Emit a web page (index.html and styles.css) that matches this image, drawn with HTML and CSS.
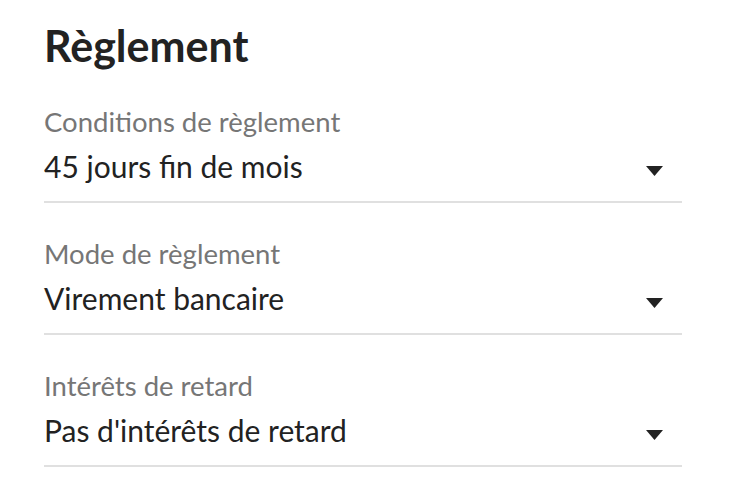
FILE: index.html
```html
<!DOCTYPE html>
<html lang="fr">
<head>
  <meta charset="UTF-8">
  <meta name="viewport" content="width=device-width, initial-scale=1.0">
  <title>Règlement</title>
  <link rel="stylesheet" href="styles.css">
</head>
<body>
  <div class="panel">
    <h1>Règlement</h1>

    <!-- Payment terms -->
    <div class="field">
      <div class="field-label">Conditions de règlement</div>
      <div class="field-select">
        <span>45 jours fin de mois</span>
        <svg class="caret" width="17" height="10" viewBox="0 0 17 10"><path d="M0 0h17L8.5 10z"/></svg>
      </div>
    </div>

    <div class="field">
      <div class="field-label">Mode de règlement</div>
      <div class="field-select">
        <span>Virement bancaire</span>
        <svg class="caret" width="17" height="10" viewBox="0 0 17 10"><path d="M0 0h17L8.5 10z"/></svg>
      </div>
    </div>

    <div class="field">
      <div class="field-label">Intérêts de retard</div>
      <div class="field-select">
        <span>Pas d'intérêts de retard</span>
        <svg class="caret" width="17" height="10" viewBox="0 0 17 10"><path d="M0 0h17L8.5 10z"/></svg>
      </div>
    </div>
  </div>
</body>
</html>
```

FILE: styles.css
```css
body {
  margin: 0;
  padding: 0;
  background: #fff;
  font-family: Lato, "Open Sans", sans-serif;
  color: #222;
}

.panel {
  width: 638px;
  padding: 21px 0 0 44px;
}

h1 {
  margin: 0 0 34px;
  font-size: 43px;
  font-weight: 700;
  line-height: 50px;
}

.field {
  border-bottom: 2px solid #e0e0e0;
  padding-bottom: 15px;
  margin-bottom: 34px;
}

.field-label {
  font-size: 27.5px;
  line-height: 34px;
  color: #767676;
}

.field-select {
  display: flex;
  align-items: center;
  justify-content: space-between;
  font-size: 30px;
  line-height: 40px;
  margin-top: 7px;
}

.caret {
  fill: #222;
  margin: 9px 19px 0 0;
}
```
